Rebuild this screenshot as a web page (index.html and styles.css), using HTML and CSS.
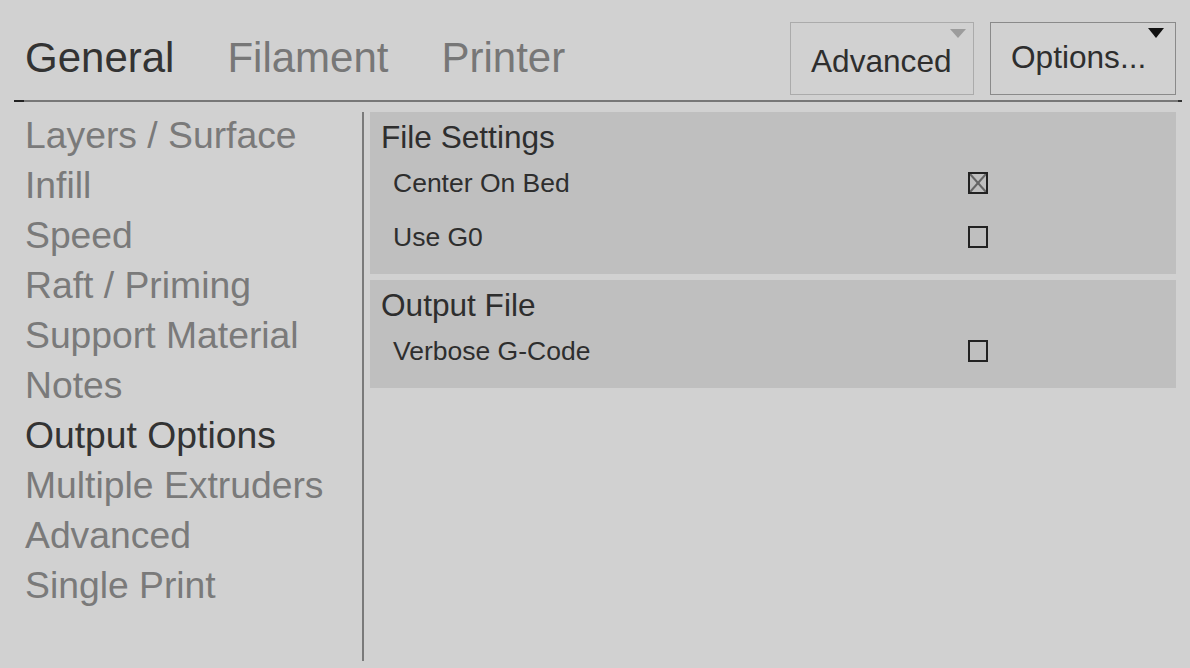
FILE: index.html
```html
<!DOCTYPE html>
<html>
<head>
<meta charset="utf-8">
<link rel="stylesheet" href="styles.css">
</head>
<body>
<div class="app">
  <header class="header">
    <nav class="tabs">
      <span class="tab active">General</span>
      <span class="tab">Filament</span>
      <span class="tab">Printer</span>
    </nav>
    <div class="buttons">
      <div class="btn btn-combo">Advanced<span class="tri tri-gray"></span></div>
      <div class="btn btn-menu">Options...<span class="tri tri-dark"></span></div>
    </div>
  </header>
  <div class="rule"></div>
  <div class="main">
    <ul class="side">
      <li>Layers / Surface</li>
      <li>Infill</li>
      <li>Speed</li>
      <li>Raft / Priming</li>
      <li>Support Material</li>
      <li>Notes</li>
      <li class="current">Output Options</li>
      <li>Multiple Extruders</li>
      <li>Advanced</li>
      <li>Single Print</li>
    </ul>
    <div class="divider"></div>
    <div class="content">
      <section class="group">
        <h2 class="group-title">File Settings</h2>
        <div class="row">
          <span class="label">Center On Bed</span>
          <svg class="check" width="20" height="22" viewBox="0 0 20 22">
            <line x1="2" y1="2" x2="18" y2="20" stroke="#666" stroke-width="2"/>
            <line x1="18" y1="2" x2="2" y2="20" stroke="#666" stroke-width="2"/>
            <rect x="1" y="1" width="18" height="20" fill="none" stroke="#222" stroke-width="2"/>
          </svg>
        </div>
        <div class="row">
          <span class="label">Use G0</span>
          <svg class="check" width="20" height="22" viewBox="0 0 20 22">
            <rect x="1" y="1" width="18" height="20" fill="none" stroke="#222" stroke-width="2"/>
          </svg>
        </div>
      </section>
      <section class="group">
        <h2 class="group-title">Output File</h2>
        <div class="row">
          <span class="label">Verbose G-Code</span>
          <svg class="check" width="20" height="22" viewBox="0 0 20 22">
            <rect x="1" y="1" width="18" height="20" fill="none" stroke="#222" stroke-width="2"/>
          </svg>
        </div>
      </section>
    </div>
  </div>
</div>
</body>
</html>
```

FILE: styles.css
```css
html, body {
  margin: 0;
  padding: 0;
  background: #d1d1d1;
}
body {
  font-family: "Liberation Sans", Arial, sans-serif;
  color: #333;
  width: 1190px;
  height: 668px;
  overflow: hidden;
}
.app {
  display: flex;
  flex-direction: column;
}
.header {
  box-sizing: border-box;
  height: 100px;
  padding-top: 22px;
  display: flex;
  justify-content: space-between;
  align-items: flex-start;
}
.tabs {
  display: flex;
  gap: 53px;
  padding-left: 25px;
  margin-top: 12px;
}
.tab {
  font-size: 42px;
  line-height: 48px;
  color: #777;
}
.tab.active {
  color: #333;
}
.buttons {
  display: flex;
  gap: 16px;
  margin-right: 14px;
}
.btn {
  position: relative;
  box-sizing: border-box;
  height: 73px;
  font-size: 31.6px;
  line-height: 36px;
  color: #2e2e2e;
  padding-left: 20px;
}
.btn-combo {
  width: 184px;
  border: 1px solid #ababab;
  padding-top: 20px;
}
.btn-menu {
  width: 186px;
  border: 1px solid #8a8a8a;
  padding-top: 16px;
}
.tri {
  position: absolute;
  width: 0;
  height: 0;
}
.tri-gray {
  top: 6px;
  right: 7px;
  border-left: 8px solid transparent;
  border-right: 8px solid transparent;
  border-top: 9px solid #9c9c9c;
}
.tri-dark {
  top: 5px;
  right: 11px;
  border-left: 8px solid transparent;
  border-right: 8px solid transparent;
  border-top: 10px solid #111;
}
.rule {
  height: 2px;
  margin: 0 8px 0 14px;
  background: linear-gradient(to right, #222 0, #222 10px, #777 10px, #777 calc(100% - 4px), #333 calc(100% - 4px));
}
.main {
  display: flex;
  height: 549px;
  margin-top: 10px;
}
.side {
  list-style: none;
  margin: -2px 0 0 0;
  padding: 0 0 0 25px;
  width: 337px;
}
.side li {
  font-size: 37.3px;
  line-height: 50px;
  color: #7a7a7a;
  white-space: nowrap;
}
.side li.current {
  color: #333;
}
.divider {
  width: 2px;
  background: #7a7a7a;
}
.content {
  flex: 1;
  margin: 0 14px 0 6px;
  display: flex;
  flex-direction: column;
  gap: 6px;
  align-self: flex-start;
}
.group {
  background: #bfbfbf;
  padding: 0 0 10px 0;
}
.group-title {
  margin: 0;
  padding: 7px 0 0 11px;
  font-size: 31.6px;
  font-weight: normal;
  line-height: 37px;
  color: #2e2e2e;
}
.row {
  display: grid;
  grid-template-columns: 575px 20px;
  align-items: center;
  height: 54px;
  padding-left: 23px;
}
.label {
  font-size: 26.5px;
  color: #2e2e2e;
}
.check {
  display: block;
}
```
